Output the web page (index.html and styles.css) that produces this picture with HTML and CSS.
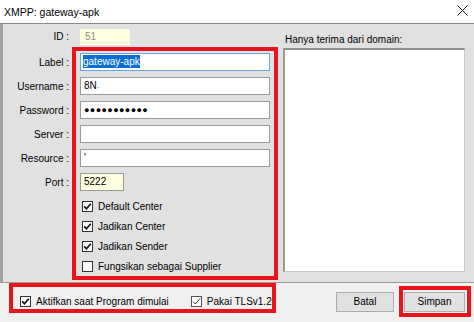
FILE: index.html
```html
<!DOCTYPE html>
<html>
<head>
  <title>XMPP: gateway-apk</title>
  <meta name="viewport" content="width=device-width, initial-scale=1.0">
  <link rel="stylesheet" href="styles.css">
</head>
<body>
  <div class="window">
    <div class="titlebar">
      <span class="title">XMPP: gateway-apk</span>
      <svg class="close" width="11" height="11" viewBox="0 0 11 11">
        <path d="M0.5 0.5 L10.5 10.5 M10.5 0.5 L0.5 10.5" stroke="#222" stroke-width="1" fill="none"/>
      </svg>
    </div>

    <div class="main">
      <div class="form">
        <div class="lbl">ID :</div>
        <div class="field field-id">51</div>

        <div class="lbl">Label :</div>
        <div class="field field-focus"><span class="sel">gateway-apk</span></div>

        <div class="lbl">Username :</div>
        <div class="field">8N<span class="speck">-</span></div>

        <div class="lbl">Password :</div>
        <div class="field field-pass">&#9679;&#9679;&#9679;&#9679;&#9679;&#9679;&#9679;&#9679;&#9679;&#9679;&#9679;</div>

        <div class="lbl">Server :</div>
        <div class="field"></div>

        <div class="lbl">Resource :</div>
        <div class="field">'</div>

        <div class="lbl">Port :</div>
        <div class="field field-port">5222</div>

        <div class="checks">
          <div class="check">
            <svg class="box" width="11" height="11" viewBox="0 0 11 11"><rect x="0.5" y="0.5" width="10" height="10" fill="#fff" stroke="#333"/><path d="M2.2 5.4 L4.4 7.8 L8.8 2.8" stroke="#111" stroke-width="1.7" fill="none"/></svg>
            <span>Default Center</span>
          </div>
          <div class="check">
            <svg class="box" width="11" height="11" viewBox="0 0 11 11"><rect x="0.5" y="0.5" width="10" height="10" fill="#fff" stroke="#333"/><path d="M2.2 5.4 L4.4 7.8 L8.8 2.8" stroke="#111" stroke-width="1.7" fill="none"/></svg>
            <span>Jadikan Center</span>
          </div>
          <div class="check">
            <svg class="box" width="11" height="11" viewBox="0 0 11 11"><rect x="0.5" y="0.5" width="10" height="10" fill="#fff" stroke="#333"/><path d="M2.2 5.4 L4.4 7.8 L8.8 2.8" stroke="#111" stroke-width="1.7" fill="none"/></svg>
            <span>Jadikan Sender</span>
          </div>
          <div class="check">
            <svg class="box" width="11" height="11" viewBox="0 0 11 11"><rect x="0.5" y="0.5" width="10" height="10" fill="#fff" stroke="#333"/></svg>
            <span>Fungsikan sebagai Supplier</span>
          </div>
        </div>
      </div>

      <div class="domains">
        <div class="domains-title">Hanya terima dari domain:</div>
        <div class="listbox"></div>
      </div>
    </div>

    <div class="footer">
      <div class="check">
        <svg class="box" width="11" height="11" viewBox="0 0 11 11"><rect x="0.5" y="0.5" width="10" height="10" fill="#fff" stroke="#333"/><path d="M2.2 5.4 L4.4 7.8 L8.8 2.8" stroke="#111" stroke-width="1.7" fill="none"/></svg>
        <span>Aktifkan saat Program dimulai</span>
      </div>
      <div class="check check-tls">
        <svg class="box" width="11" height="11" viewBox="0 0 11 11"><rect x="0.5" y="0.5" width="10" height="10" fill="#fff" stroke="#555"/><path d="M2 5.6 L4.4 8 L9 2.6" stroke="#333" stroke-width="1" fill="none"/></svg>
        <span>Pakai TLSv1.2</span>
      </div>
      <div class="buttons">
        <button class="btn">Batal</button>
        <button class="btn btn-save">Simpan</button>
      </div>
    </div>

    <!-- red annotation frames drawn over the dialog -->
    <div class="mark mark-form"></div>
    <div class="mark mark-opts"></div>
    <div class="mark mark-save"></div>
  </div>
</body>
</html>
```

FILE: styles.css
```css
body {
  margin: 0;
  font-family: "Liberation Sans", Arial, sans-serif;
  font-size: 10px;
  color: #000;
  background: #f0f0f0;
}

.window {
  position: relative;
  width: 474px;
  height: 322px;
  overflow: hidden;
}

.titlebar {
  height: 23px;
  background: #fff;
  border-bottom: 1px solid #8a8a8a;
  display: flex;
  align-items: center;
  padding-left: 4px;
  padding-right: 6px;
}

.title {
  font-size: 10.5px;
  flex: 1;
}

.close {
  margin-bottom: 2px;
}

.main {
  height: 258px;
  background: #e1e1e1;
  border-left: 3px solid #a3a3a3;
  border-bottom: 1px solid #9c9c9c;
  display: flex;
}

.form {
  display: grid;
  grid-template-columns: 66px 190px;
  grid-auto-rows: 18px;
  column-gap: 11px;
  row-gap: 6px;
  align-items: center;
  padding-top: 5px;
}

.lbl {
  text-align: right;
  white-space: nowrap;
}

.field {
  box-sizing: border-box;
  height: 18px;
  background: #fff;
  border: 1px solid #9b9b9b;
  padding: 0 3px;
  line-height: 16px;
  white-space: nowrap;
  overflow: hidden;
}

.lbl:first-child {
  height: 16px;
  line-height: 16px;
  margin-bottom: -2px;
  align-self: start;
}

.field-id {
  width: 50px;
  height: 16px;
  line-height: 16px;
  margin-bottom: -2px;
  align-self: start;
  border: none;
  background: #ffffe1;
  color: #8f8f7a;
  padding-left: 5px;
}

.field-focus {
  border-color: #6aa6e0;
  padding-left: 2px;
}

.sel {
  background: #0a6fd1;
  color: #fff;
  padding: 1px 0;
}

.speck {
  color: #999;
  font-size: 8px;
}

.field-pass {
  font-size: 9px;
  letter-spacing: 0.4px;
}

.field-port {
  width: 44px;
  background: #ffffe1;
}

.checks {
  grid-column: 2;
  grid-row: span 4;
  align-self: start;
  display: flex;
  flex-direction: column;
  margin-top: -1px;
}

.check {
  display: flex;
  align-items: center;
  gap: 5px;
  height: 20px;
  white-space: nowrap;
}

.checks .check {
  padding-left: 2px;
}

.domains {
  margin-left: 13px;
  padding-top: 9px;
}

.domains-title {
  height: 14px;
  line-height: 14px;
  padding-left: 2px;
  margin-bottom: 1px;
}

.listbox {
  box-sizing: border-box;
  width: 182px;
  height: 224px;
  background: #fff;
  border: 1px solid #c8c8c8;
  border-top: 2px solid #8f8f8f;
  border-left: 2px solid #9a9a9a;
}

.footer {
  height: 39px;
  background: #f0f0f0;
  display: flex;
  align-items: center;
  padding-left: 20px;
  padding-right: 9px;
  padding-bottom: 2px;
  box-sizing: border-box;
}

.check-tls {
  margin-left: 22px;
}

.buttons {
  margin-left: auto;
  display: flex;
  gap: 10px;
}

.btn {
  font-family: "Liberation Sans", Arial, sans-serif;
  font-size: 10px;
  height: 20px;
  width: 58px;
  padding: 0;
  background: #e1e1e1;
  border: 1px solid #adadad;
  color: #000;
}

.btn-save {
  width: 61px;
}

.mark {
  position: absolute;
  border: 4px solid #e8141c;
  box-sizing: border-box;
}

.mark-form {
  left: 72px;
  top: 47px;
  width: 206px;
  height: 233px;
}

.mark-opts {
  left: 9px;
  top: 283px;
  width: 267px;
  height: 30px;
}

.mark-save {
  left: 399px;
  top: 286px;
  width: 72px;
  height: 31px;
}
```
